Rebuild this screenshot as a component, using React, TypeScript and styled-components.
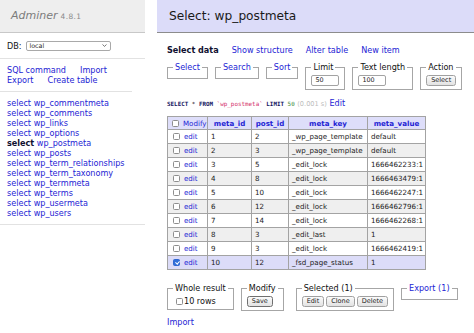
import React from 'react';
import styled, { createGlobalStyle } from 'styled-components';

const GlobalStyle = createGlobalStyle`
  html, body {
    margin: 0;
    padding: 0;
    background: #fff;
  }
  body {
    font: 8.1px/10px "DejaVu Sans", Verdana, sans-serif;
    color: #111;
    width: 474px;
    height: 333px;
    overflow: hidden;
  }
`;

const LINK = '#2424d4';

const Page = styled.div`
  display: flex;
  align-items: flex-start;
`;

const Menu = styled.div`
  flex: 0 0 145px;
`;

const Logo = styled.h1`
  margin: 0;
  height: 33px;
  box-sizing: border-box;
  padding: 0 11px;
  background: #eee;
  border-bottom: 1px solid #c8c8c8;
  font-size: 11px;
  line-height: 32px;
  font-weight: normal;
  font-style: italic;
  color: #7c7c7c;
  white-space: nowrap;
`;

const Version = styled.span`
  font-style: normal;
  font-size: 7.4px;
  letter-spacing: 0.4px;
  color: #888;
  margin-left: 3px;
`;

const MenuBlock = styled.div`
  padding: 6px 7px;
  border-bottom: 1px solid #e2e2e2;
`;

const DbRow = styled(MenuBlock)`
  display: flex;
  align-items: center;
  gap: 4px;
  height: 13px;
`;

const SelectBox = styled.div`
  display: flex;
  align-items: center;
  justify-content: space-between;
  box-sizing: border-box;
  width: 85px;
  height: 10px;
  padding: 0 3px;
  border: 1px solid #a9a9a9;
  border-radius: 2px;
  font-size: 6.3px;
  color: #222;
`;

const LinkWrap = styled(MenuBlock)`
  display: flex;
  flex-wrap: wrap;
  column-gap: 14px;
  width: 118px;
`;

const Link = styled.a<{ $active?: boolean }>`
  color: ${(p) => (p.$active ? '#101030' : LINK)};
  font-weight: ${(p) => (p.$active ? 'bold' : 'inherit')};
  text-decoration: none;
  white-space: nowrap;
  cursor: pointer;
`;

const TableList = styled(MenuBlock)`
  display: flex;
  flex-direction: column;
`;

const Main = styled.div`
  flex: 1;
  min-width: 0;
  margin-left: 12px;
`;

const Title = styled.h2`
  margin: 0;
  height: 33px;
  box-sizing: border-box;
  padding-left: 12px;
  background: #dcdcf9;
  border-bottom: 1px solid #8c8c8c;
  font-size: 12.2px;
  line-height: 32px;
  font-weight: normal;
  color: #1a1a1a;
  white-space: nowrap;
`;

const Content = styled.div`
  padding-left: 10px;
`;

const NavLinks = styled.div`
  display: flex;
  gap: 13px;
  margin-top: 12px;
`;

const FieldRow = styled.div<{ $top: number }>`
  display: flex;
  align-items: flex-start;
  gap: 7px;
  margin-top: ${(p) => p.$top}px;
`;

const Fieldset = styled.fieldset<{ $push?: boolean }>`
  margin: 0 0 0 ${(p) => (p.$push ? 5 : 0)}px;
  padding: 3px 5px;
  min-width: 0;
  border: 1px solid #a6a6a6;
`;

const Legend = styled.legend<{ $link?: boolean }>`
  padding: 0 2px;
  line-height: 10px;
  white-space: nowrap;
  color: ${(p) => (p.$link ? LINK : '#111')};
`;

const FieldBody = styled.div`
  display: flex;
  align-items: center;
  gap: 2px;
`;

const TextInput = styled.div`
  box-sizing: border-box;
  width: 28px;
  height: 11px;
  padding: 0 3px;
  border: 1px solid #a3a3a3;
  border-radius: 2px;
  font-size: 6.4px;
  line-height: 9px;
  color: #222;
`;

const Button = styled.button<{ $strong?: boolean }>`
  box-sizing: border-box;
  height: 11px;
  margin: 0;
  padding: 0 4px;
  border: 1px solid ${(p) => (p.$strong ? '#6f6f6f' : '#a0a0a0')};
  border-radius: 2.5px;
  background: linear-gradient(#fbfbfb, #e2e2e2);
  font: 6.5px/9px "DejaVu Sans", Verdana, sans-serif;
  color: #222;
`;

const SqlLine = styled.div`
  margin-top: 8px;
  white-space: nowrap;
`;

const Code = styled.code`
  font-family: "DejaVu Sans Mono", "Liberation Mono", monospace;
  font-size: 5.9px;
  color: #000;
`;

const Kw = styled.span`
  font-weight: bold;
  color: #14145e;
`;

const Ident = styled.span`
  color: #d4306a;
`;

const Num = styled.span`
  color: #3d8a3d;
`;

const Time = styled.span`
  font-size: 6.6px;
  color: #bdbdbd;
`;

const Grid = styled.table`
  margin-top: 7px;
  border-collapse: collapse;
  table-layout: fixed;
  width: 258px;
  font-size: 7.1px;
  line-height: 9px;
`;

const Col = styled.col<{ $w: number }>`
  width: ${(p) => p.$w}px;
`;

const HeadRow = styled.tr`
  height: 13px;
  background: #dedefa;
`;

const Th = styled.th<{ $left?: boolean }>`
  padding: 0 2px;
  border: 1px solid #a3a3a3;
  text-align: ${(p) => (p.$left ? 'left' : 'center')};
  font-weight: ${(p) => (p.$left ? 'normal' : 'bold')};
  white-space: nowrap;
  overflow: hidden;
`;

const Row = styled.tr<{ $even?: boolean; $checked?: boolean }>`
  height: 14px;
  background: ${(p) => (p.$checked ? '#dcdcf8' : p.$even ? '#efefef' : '#fff')};
`;

const Td = styled.td`
  padding: 0 2px 0 3px;
  border: 1px solid #a3a3a3;
  color: #1a1a1a;
  white-space: nowrap;
  overflow: hidden;
`;

const CheckCell = styled.span`
  display: flex;
  align-items: center;
  gap: 4px;
  padding-left: 2px;
`;

const Check = styled.span<{ $checked?: boolean }>`
  position: relative;
  display: inline-block;
  box-sizing: border-box;
  width: 7px;
  height: 7px;
  border: 1px solid ${(p) => (p.$checked ? '#2f66d0' : '#8e8e8e')};
  border-radius: 1.5px;
  background: ${(p) => (p.$checked ? '#2f6ed9' : '#fff')};
  flex: 0 0 auto;
  &::after {
    content: '';
    display: ${(p) => (p.$checked ? 'block' : 'none')};
    position: absolute;
    left: 1.6px;
    top: 0.2px;
    width: 1.6px;
    height: 3.2px;
    border: solid #fff;
    border-width: 0 1px 1px 0;
    transform: rotate(42deg);
  }
`;

const RowsLabel = styled.span`
  display: flex;
  align-items: center;
  gap: 1px;
  padding-left: 3px;
`;

const Footer = styled.div`
  margin-top: 6px;
`;

const tables = [
  'wp_commentmeta',
  'wp_comments',
  'wp_links',
  'wp_options',
  'wp_postmeta',
  'wp_posts',
  'wp_term_relationships',
  'wp_term_taxonomy',
  'wp_termmeta',
  'wp_terms',
  'wp_usermeta',
  'wp_users',
];

const rows: [number, number, string, string][] = [
  [1, 2, '_wp_page_template', 'default'],
  [2, 3, '_wp_page_template', 'default'],
  [3, 5, '_edit_lock', '1666462233:1'],
  [4, 8, '_edit_lock', '1666463479:1'],
  [5, 10, '_edit_lock', '1666462247:1'],
  [6, 12, '_edit_lock', '1666462796:1'],
  [7, 14, '_edit_lock', '1666462268:1'],
  [8, 3, '_edit_last', '1'],
  [9, 3, '_edit_lock', '1666462419:1'],
  [10, 12, '_fsd_page_status', '1'],
];

const Chevron = () => (
  <svg width="5" height="3" viewBox="0 0 5 3">
    <path d="M0.5 0.5 L2.5 2.4 L4.5 0.5" fill="none" stroke="#555" strokeWidth="0.8" />
  </svg>
);

const App: React.FC = () => (
  <>
    <GlobalStyle />
    <Page>
      <Menu>
        <Logo>
          Adminer<Version>4.8.1</Version>
        </Logo>
        <DbRow>
          DB:
          <SelectBox>
            local
            <Chevron />
          </SelectBox>
        </DbRow>
        <LinkWrap>
          <Link>SQL command</Link>
          <Link>Import</Link>
          <Link>Export</Link>
          <Link>Create table</Link>
        </LinkWrap>
        <TableList>
          {tables.map((name) => (
            <span key={name}>
              <Link $active={name === 'wp_postmeta'}>select</Link> <Link>{name}</Link>
            </span>
          ))}
        </TableList>
      </Menu>

      <Main>
        <Title>Select: wp_postmeta</Title>
        <Content>
          <NavLinks>
            <Link $active>Select data</Link>
            <Link>Show structure</Link>
            <Link>Alter table</Link>
            <Link>New item</Link>
          </NavLinks>

          <FieldRow $top={7}>
            <Fieldset>
              <Legend $link>Select</Legend>
            </Fieldset>
            <Fieldset>
              <Legend $link>Search</Legend>
            </Fieldset>
            <Fieldset>
              <Legend $link>Sort</Legend>
            </Fieldset>
            <Fieldset>
              <Legend>Limit</Legend>
              <FieldBody>
                <TextInput>50</TextInput>
              </FieldBody>
            </Fieldset>
            <Fieldset>
              <Legend>Text length</Legend>
              <FieldBody>
                <TextInput>100</TextInput>
              </FieldBody>
            </Fieldset>
            <Fieldset>
              <Legend>Action</Legend>
              <FieldBody>
                <Button>Select</Button>
              </FieldBody>
            </Fieldset>
          </FieldRow>

          <SqlLine>
            <Code>
              <Kw>SELECT</Kw> * <Kw>FROM</Kw> <Ident>`wp_postmeta`</Ident> <Kw>LIMIT</Kw> <Num>50</Num>
            </Code>{' '}
            <Time>(0.001 s)</Time> <Link>Edit</Link>
          </SqlLine>

          <Grid>
            <colgroup>
              <Col $w={40} />
              <Col $w={44} />
              <Col $w={37} />
              <Col $w={79} />
              <Col $w={58} />
            </colgroup>
            <thead>
              <HeadRow>
                <Th $left>
                  <CheckCell>
                    <Check />
                    <Link>Modify</Link>
                  </CheckCell>
                </Th>
                <Th><Link>meta_id</Link></Th>
                <Th><Link>post_id</Link></Th>
                <Th><Link>meta_key</Link></Th>
                <Th><Link>meta_value</Link></Th>
              </HeadRow>
            </thead>
            <tbody>
              {rows.map(([id, post, key, value], i) => (
                <Row key={id} $even={i % 2 === 1} $checked={id === 10}>
                  <Td>
                    <CheckCell>
                      <Check $checked={id === 10} />
                      <Link>edit</Link>
                    </CheckCell>
                  </Td>
                  <Td>{id}</Td>
                  <Td>{post}</Td>
                  <Td>{key}</Td>
                  <Td>{value}</Td>
                </Row>
              ))}
            </tbody>
          </Grid>

          <FieldRow $top={13}>
            <Fieldset>
              <Legend>Whole result</Legend>
              <FieldBody>
                <RowsLabel>
                  <Check />
                  10 rows
                </RowsLabel>
              </FieldBody>
            </Fieldset>
            <Fieldset>
              <Legend>Modify</Legend>
              <FieldBody>
                <Button $strong>Save</Button>
              </FieldBody>
            </Fieldset>
            <Fieldset $push>
              <Legend>Selected (1)</Legend>
              <FieldBody>
                <Button>Edit</Button>
                <Button>Clone</Button>
                <Button>Delete</Button>
              </FieldBody>
            </Fieldset>
            <Fieldset>
              <Legend $link>Export (1)</Legend>
            </Fieldset>
          </FieldRow>

          <Footer>
            <Link>Import</Link>
          </Footer>
        </Content>
      </Main>
    </Page>
  </>
);

export default App;
